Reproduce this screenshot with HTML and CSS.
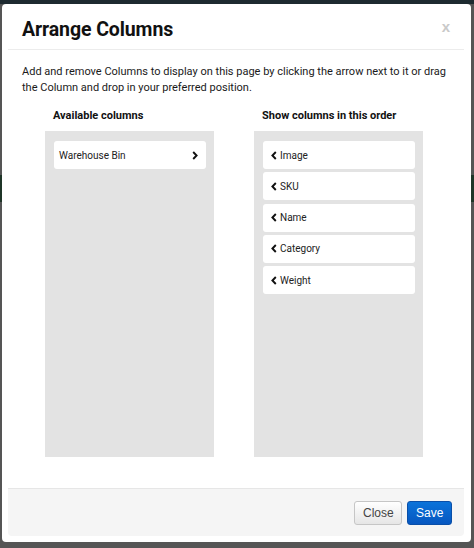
FILE: index.html
```html
<!DOCTYPE html>
<html lang="en">
<head>
<meta charset="utf-8">
<title>Arrange Columns</title>
<link rel="stylesheet" href="styles.css">
</head>
<body>
<div class="page">
  <div class="modal">
    <div class="modal-header">
      <h1 class="modal-title">Arrange Columns</h1>
      <span class="modal-close">x</span>
    </div>
    <div class="modal-body">
      <p class="intro">Add and remove Columns to display on this page by clicking the arrow next to it or drag the Column and drop in your preferred position.</p>
      <div class="columns">
        <div class="col">
          <div class="col-title">Available columns</div>
          <div class="panel">
            <div class="card card-right"><span>Warehouse Bin</span>
              <svg class="chev" viewBox="0 0 6 9" width="6" height="9"><path d="M1.2 1 L4.6 4.5 L1.2 8" fill="none" stroke="#111" stroke-width="1.9"/></svg>
            </div>
          </div>
        </div>
        <div class="col">
          <div class="col-title">Show columns in this order</div>
          <div class="panel">
            <div class="card"><svg class="chev" viewBox="0 0 6 9" width="6" height="9"><path d="M4.8 1 L1.4 4.5 L4.8 8" fill="none" stroke="#111" stroke-width="1.9"/></svg><span>Image</span></div>
            <div class="card"><svg class="chev" viewBox="0 0 6 9" width="6" height="9"><path d="M4.8 1 L1.4 4.5 L4.8 8" fill="none" stroke="#111" stroke-width="1.9"/></svg><span>SKU</span></div>
            <div class="card"><svg class="chev" viewBox="0 0 6 9" width="6" height="9"><path d="M4.8 1 L1.4 4.5 L4.8 8" fill="none" stroke="#111" stroke-width="1.9"/></svg><span>Name</span></div>
            <div class="card"><svg class="chev" viewBox="0 0 6 9" width="6" height="9"><path d="M4.8 1 L1.4 4.5 L4.8 8" fill="none" stroke="#111" stroke-width="1.9"/></svg><span>Category</span></div>
            <div class="card"><svg class="chev" viewBox="0 0 6 9" width="6" height="9"><path d="M4.8 1 L1.4 4.5 L4.8 8" fill="none" stroke="#111" stroke-width="1.9"/></svg><span>Weight</span></div>
          </div>
        </div>
      </div>
    </div>
    <div class="modal-footer">
      <button class="btn btn-default">Close</button>
      <button class="btn btn-primary">Save</button>
    </div>
  </div>
</div>
</body>
</html>
```
FILE: styles.css
```css
* { box-sizing: border-box; }
html, body { margin: 0; padding: 0; }
body {
  width: 474px;
  height: 548px;
  overflow: hidden;
  background: linear-gradient(to bottom, #1d2a30 0, #1d2a30 4px, #555 4px, #555 175px, #1f3528 175px, #1f3528 202px, #555 202px, #555 100%);
  font-family: Roboto, "Liberation Sans", sans-serif;
  color: #222;
}
.page { padding: 4px 0 0 2px; }
.modal {
  width: 469px;
  height: 538px;
  background: #fff;
  border-radius: 4px;
  padding: 0 7px 6px 6px;
  display: flex;
  flex-direction: column;
}
.modal-header {
  height: 46px;
  border-bottom: 1px solid #ececec;
  display: flex;
  align-items: center;
  justify-content: space-between;
  padding: 6px 14px 0 14px;
}
.modal-title {
  margin: 0;
  font-size: 19.5px;
  font-weight: 700;
  color: #111;
  letter-spacing: -0.1px;
}
.modal-close {
  font-family: "Liberation Sans", Arial, sans-serif;
  font-weight: 700;
  font-size: 15px;
  color: #c9c9c9;
  margin-top: -6px;
}
.modal-body {
  flex: 1;
  padding: 14px 14px 0 14px;
}
.intro {
  margin: 0;
  font-size: 11px;
  line-height: 16px;
  color: #1a1a1a;
}
.columns {
  display: flex;
  gap: 40px;
  padding-left: 23px;
  margin-top: 11px;
}
.col { width: 169px; }
.col-title {
  font-size: 11px;
  font-weight: 700;
  line-height: 18px;
  padding-left: 8px;
  margin-bottom: 6px;
  color: #111;
}
.panel {
  height: 326px;
  background: #e3e3e3;
  padding: 10px 8px 0 9px;
  display: flex;
  flex-direction: column;
  gap: 3.33px;
}
.card {
  height: 28px;
  background: #fff;
  border-radius: 3px;
  display: flex;
  align-items: center;
  gap: 3px;
  padding: 0 8px 0 8px;
  font-size: 10px;
  color: #222;
}
.card-right {
  justify-content: space-between;
  padding-left: 5px;
}
.chev { flex: none; }
.modal-footer {
  height: 48px;
  background: #f5f5f5;
  border-top: 1px solid #e6e6e6;
  border-radius: 0 0 4px 4px;
  display: flex;
  align-items: center;
  justify-content: flex-end;
  gap: 5px;
  padding: 0 12px 0 0;
}
.btn {
  height: 24px;
  font-family: "Liberation Sans", Arial, sans-serif;
  font-size: 12px;
  border-radius: 3px;
  padding: 0 8px;
  cursor: pointer;
}
.btn-default {
  width: 48px;
  color: #444;
  background: linear-gradient(to bottom, #fff, #e6e6e6);
  border: 1px solid #c6c6c6;
}
.btn-primary {
  width: 45px;
  color: #fff;
  background: linear-gradient(to bottom, #0b73da, #0757c0);
  border: 1px solid #0a4fa8;
}
```
